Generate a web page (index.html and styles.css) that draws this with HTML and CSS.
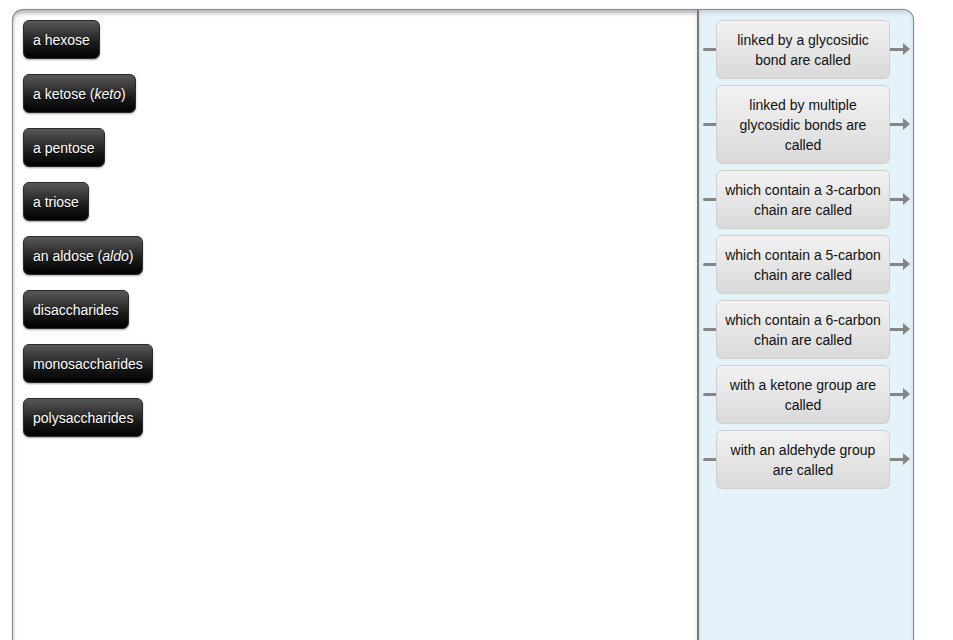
FILE: index.html
```html
<!DOCTYPE html>
<html>
<head>
<meta charset="utf-8">
<link rel="stylesheet" href="styles.css">
</head>
<body>
<div class="board">
  <div class="source">
    <div class="chip">a hexose</div>
    <div class="chip">a ketose (<i>keto</i>)</div>
    <div class="chip">a pentose</div>
    <div class="chip">a triose</div>
    <div class="chip">an aldose (<i>aldo</i>)</div>
    <div class="chip">disaccharides</div>
    <div class="chip">monosaccharides</div>
    <div class="chip">polysaccharides</div>
  </div>
  <div class="targets">
    <div class="row"><span class="stub"></span><div class="card">linked by a glycosidic<br>bond are called</div><span class="arrow"></span></div>
    <div class="row"><span class="stub"></span><div class="card">linked by multiple<br>glycosidic bonds are<br>called</div><span class="arrow"></span></div>
    <div class="row"><span class="stub"></span><div class="card">which contain a 3-carbon<br>chain are called</div><span class="arrow"></span></div>
    <div class="row"><span class="stub"></span><div class="card">which contain a 5-carbon<br>chain are called</div><span class="arrow"></span></div>
    <div class="row"><span class="stub"></span><div class="card">which contain a 6-carbon<br>chain are called</div><span class="arrow"></span></div>
    <div class="row"><span class="stub"></span><div class="card">with a ketone group are<br>called</div><span class="arrow"></span></div>
    <div class="row"><span class="stub"></span><div class="card">with an aldehyde group<br>are called</div><span class="arrow"></span></div>
  </div>
</div>
</body>
</html>
```
FILE: styles.css
```css
html, body {
  margin: 0;
  padding: 0;
  background: #fff;
  overflow: hidden;
}
body {
  font-family: "Liberation Sans", Arial, Helvetica, sans-serif;
  font-size: 14px;
}
.board {
  margin: 9px 0 0 12px;
  width: 900px;
  height: 660px;
  border: 1px solid #8a8a8a;
  border-bottom: none;
  border-radius: 11px 11px 0 0;
  display: flex;
  overflow: hidden;
  box-shadow: inset 0 3px 4px rgba(0,0,0,0.18), 0 0 2px rgba(0,0,0,0.15);
  background: #fff;
}
.source {
  width: 686px;
  border-right: 2px solid #7a7a7a;
  padding: 10px 0 0 10px;
  box-sizing: border-box;
  display: flex;
  flex-direction: column;
  align-items: flex-start;
  gap: 15px;
  box-shadow: inset 0 3px 4px rgba(0,0,0,0.15);
}
.chip {
  height: 39px;
  box-sizing: border-box;
  padding: 0 9px;
  display: flex;
  align-items: center;
  color: #fff;
  background: linear-gradient(#585858, #1c1c1c 60%, #000);
  border-radius: 6px;
  border: 1px solid #2a2a2a;
  box-shadow: 0 1px 2px rgba(0,0,0,0.35);
  text-shadow: 0 1px 1px rgba(0,0,0,0.9);
  white-space: nowrap;
}
.targets {
  flex: 1;
  background: #e4f2fa;
  padding-top: 10px;
  display: flex;
  flex-direction: column;
  gap: 6px;
  box-shadow: inset 0 3px 4px rgba(0,0,0,0.12);
}
.row {
  display: flex;
  align-items: center;
  padding-left: 4px;
}
.stub {
  width: 13px;
  height: 3px;
  background: #858585;
  border-radius: 2px 0 0 2px;
}
.card {
  width: 174px;
  box-sizing: border-box;
  padding: 9px 4px 8px;
  line-height: 20px;
  text-align: center;
  color: #111;
  background: linear-gradient(#f2f2f2, #d9d9d9);
  border: 1px solid #cfcfcf;
  border-radius: 6px;
}
.arrow {
  position: relative;
  width: 14px;
  height: 3px;
  background: #858585;
}
.arrow::after {
  content: "";
  position: absolute;
  left: 13px;
  top: -5px;
  border-left: 7px solid #858585;
  border-top: 6.5px solid transparent;
  border-bottom: 6.5px solid transparent;
}
```
